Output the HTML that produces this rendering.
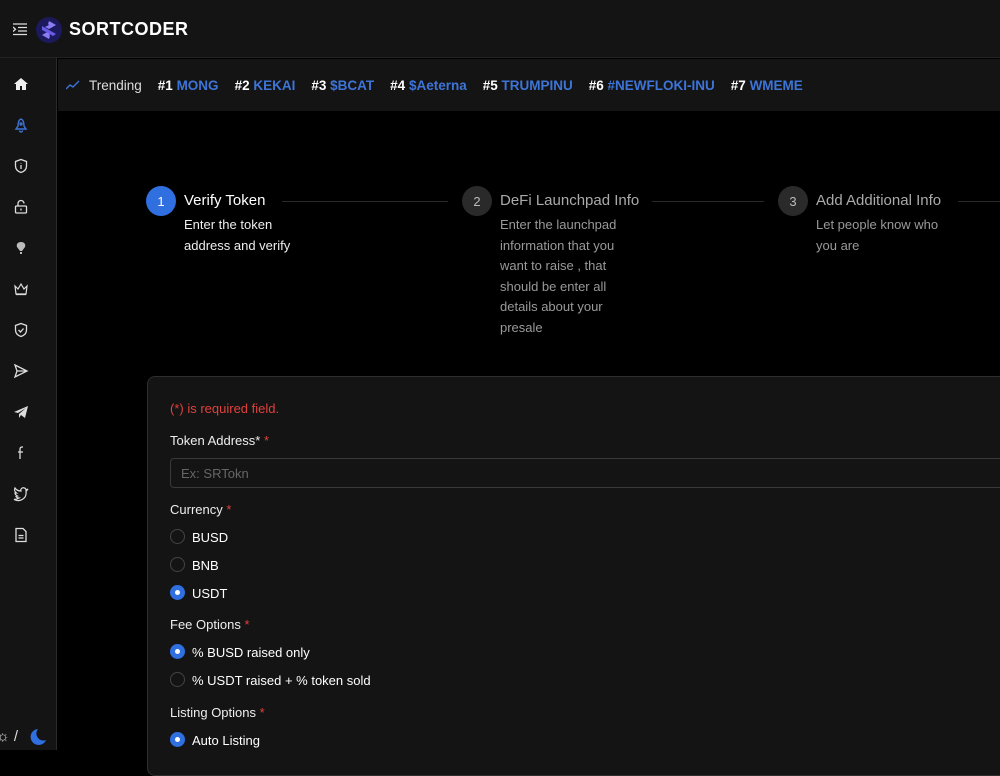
<!DOCTYPE html>
<html><head><meta charset="utf-8"><style>
*{box-sizing:border-box;margin:0;padding:0}
body{width:1000px;height:750px;overflow:hidden;background:#000;font-family:"Liberation Sans",sans-serif;color:#fff;position:relative}
.hdr{position:absolute;left:0;top:0;width:1000px;height:58px;background:#141414;border-bottom:1px solid #222}
.side{position:absolute;left:0;top:58px;width:57px;height:692px;background:#141414;border-right:1px solid #2a2a2a}
.trend{position:absolute;left:58px;top:59px;width:942px;height:52px;background:#141414;font-size:13.5px;display:flex;align-items:center;padding-left:8px}
.trend b{font-weight:bold;margin-left:16px}
.trend b span{color:#3d74d8}
.ic{position:absolute;left:13px;width:16px;height:16px}
.num{position:absolute;width:30px;height:30px;border-radius:50%;font-size:13px;display:flex;align-items:center;justify-content:center}
.st{position:absolute;font-size:15px;white-space:nowrap}
.sd{position:absolute;font-size:13px;line-height:20.5px;width:125px}
.line{position:absolute;height:1px;background:#2a2a2a;top:201px}
.card{position:absolute;left:147px;top:376px;width:870px;height:400px;background:#141414;border:1px solid #2e2e2e;border-radius:8px}
.t{position:absolute;left:170px;font-size:13px}
.r{color:#e0413c}
.rad{position:absolute;left:170px;width:15px;height:15px;border-radius:50%;border:1px solid #444}
.rad.on{background:#2f6fe0;border:none}
.rad.on::after{content:"";position:absolute;left:5px;top:5px;width:5px;height:5px;border-radius:50%;background:#fff}
.rl{position:absolute;left:192px;font-size:13px}
</style></head><body>
<div class="hdr">
<svg style="position:absolute;left:13px;top:23px" width="15" height="13" viewBox="0 0 15 13" stroke="#ddd" stroke-width="1.3" fill="none"><path d="M0 1h14M5 4.5h9M5 8h9M0 11.5h14M0 4l2.5 2.2L0 8.5"/></svg>
<svg style="position:absolute;left:36px;top:17px" width="26" height="26" viewBox="0 0 26 26"><circle cx="13" cy="13" r="13" fill="#1c1a5c"/><path d="M13 4l7 4-7 4-4-2 4-2-1-1z M13 22l-7-4 7-4 4 2-4 2 1 1z" fill="#8b7cf5"/><path d="M6 9l7 4 7 4-3 2-7-4-4-2z" fill="#6a5ae8"/></svg>
<div style="position:absolute;left:69px;top:19px;font-size:18px;font-weight:bold;letter-spacing:0.5px">SORTCODER</div>
</div>
<div class="side">
<svg class="ic" style="top:18px" viewBox="0 0 16 16"><path d="M8 2L1 8h2v6h4v-4h2v4h4V8h2z" fill="#eee"/></svg>
<svg class="ic" style="top:59px" viewBox="0 0 16 16" fill="none" stroke="#3d74d8" stroke-width="1.4"><path d="M8 2c3 1 3 5 3 7l2 3H3l2-3c0-2 0-6 3-7zM6.5 13.5a1.5 1.5 0 003 0"/><circle cx="8" cy="7" r="1"/></svg>
<svg class="ic" style="top:100px" viewBox="0 0 16 16" fill="none" stroke="#ddd" stroke-width="1.3"><path d="M8 1.5l5.5 2v4.5c0 3.5-2.5 5.5-5.5 6.5C5 13.5 2.5 11.5 2.5 8V3.5z M8 7v4M8 5v.5"/></svg>
<svg class="ic" style="top:141px" viewBox="0 0 16 16" fill="none" stroke="#ddd" stroke-width="1.3"><rect x="2.5" y="7" width="11" height="7" rx="1"/><path d="M5 7V4.5a3 3 0 016 0M8 9.5v2"/></svg>
<svg class="ic" style="top:182px" viewBox="0 0 16 16"><path d="M8 2c3 0 5 2 4 5l-3 4H7L4 7C3 4 5 2 8 2zM7 12h2v2H7z" fill="#bbb"/></svg>
<svg class="ic" style="top:223px" viewBox="0 0 16 16" fill="none" stroke="#ddd" stroke-width="1.2"><path d="M2 5l3 3 3-5 3 5 3-3-1 8H3z M3 13.5h10"/></svg>
<svg class="ic" style="top:264px" viewBox="0 0 16 16" fill="none" stroke="#ddd" stroke-width="1.3"><path d="M8 1.5l5.5 2v4.5c0 3.5-2.5 5.5-5.5 6.5C5 13.5 2.5 11.5 2.5 8V3.5z M5.5 8l2 2 3-3.5"/></svg>
<svg class="ic" style="top:305px" viewBox="0 0 16 16" fill="none" stroke="#ddd" stroke-width="1.3"><path d="M2 2l12 6-12 6 2-6zM4 8h10"/></svg>
<svg class="ic" style="top:346px" viewBox="0 0 16 16"><path d="M1 8l14-6-3 12-4-3-2 3v-4l7-6-8 5z" fill="#ddd"/></svg>
<svg class="ic" style="top:387px" viewBox="0 0 16 16" fill="none" stroke="#ddd" stroke-width="1.3"><path d="M10 2H9C7.5 2 7 3 7 4.5V14M5 7h5"/></svg>
<svg class="ic" style="top:428px" viewBox="0 0 16 16" fill="none" stroke="#ddd" stroke-width="1.2"><path d="M15 3l-2 1c0-2-3-3-4.5-1.5C7.5 3.5 8 5 8 5 5 5 3 3.5 2 2c-1 2 0 4 1.5 5L2 7c0 1.5 1.5 2.5 2.5 3L3 10.5c.5 1 2 1.5 3 1.5C4.5 13 3 13.5 1 13.5c6 3 13-1 12-8z"/></svg>
<svg class="ic" style="top:469px" viewBox="0 0 16 16" fill="none" stroke="#ddd" stroke-width="1.3"><path d="M3 1.5h7l3 3v10H3z M5.5 8.5h5M5.5 11h5"/></svg>
<div style="position:absolute;left:-4px;top:670px;font-size:15px;color:#ddd">☼ /</div>
<svg style="position:absolute;left:29px;top:671px" width="18" height="17" viewBox="0 0 18 17"><path d="M9 0a8 8 0 108 11A7 7 0 019 0z" fill="#2f6fe0"/></svg>
</div>
<div class="trend">
<svg width="14" height="10" viewBox="0 0 14 10" fill="none" stroke="#3d74d8" stroke-width="1.4"><path d="M0 9l4-4 3 2 6-6"/></svg>
<span style="margin-left:9px;color:#ddd">Trending</span>
<b>#1 <span>MONG</span></b><b>#2 <span>KEKAI</span></b><b>#3 <span>$BCAT</span></b><b>#4 <span>$Aeterna</span></b><b>#5 <span>TRUMPINU</span></b><b>#6 <span>#NEWFLOKI-INU</span></b><b>#7 <span>WMEME</span></b>
</div>
<div class="num" style="left:146px;top:186px;background:#2f6fe0">1</div>
<div class="st" style="left:184px;top:192px">Verify Token</div>
<div class="line" style="left:282px;width:166px"></div>
<div class="sd" style="left:184px;top:215px;color:#eee">Enter the token address and verify</div>
<div class="num" style="left:462px;top:186px;background:#2a2a2a;color:#bbb">2</div>
<div class="st" style="left:500px;top:192px;color:#aaa">DeFi Launchpad Info</div>
<div class="line" style="left:652px;width:112px"></div>
<div class="sd" style="left:500px;top:215px;color:#999;width:130px">Enter the launchpad information that you want to raise , that should be enter all details about your presale</div>
<div class="num" style="left:778px;top:186px;background:#2a2a2a;color:#bbb">3</div>
<div class="st" style="left:816px;top:192px;color:#aaa">Add Additional Info</div>
<div class="line" style="left:958px;width:42px"></div>
<div class="sd" style="left:816px;top:215px;color:#999;width:135px">Let people know who you are</div>
<div class="card"></div>
<div class="t r" style="top:401px">(*) is required field.</div>
<div class="t" style="top:433px;color:#eee">Token Address* <span class="r">*</span></div>
<div style="position:absolute;left:170px;top:458px;width:840px;height:30px;border:1px solid #3a3a3a;border-radius:4px;font-size:13px;color:#666;padding:7px 10px">Ex: SRTokn</div>
<div class="t" style="top:502px;color:#eee">Currency <span class="r">*</span></div>
<div class="rad" style="top:529px"></div><div class="rl" style="top:530px">BUSD</div>
<div class="rad" style="top:557px"></div><div class="rl" style="top:558px">BNB</div>
<div class="rad on" style="top:585px"></div><div class="rl" style="top:586px">USDT</div>
<div class="t" style="top:617px;color:#eee">Fee Options <span class="r">*</span></div>
<div class="rad on" style="top:644px"></div><div class="rl" style="top:645px">% BUSD raised only</div>
<div class="rad" style="top:672px"></div><div class="rl" style="top:673px">% USDT raised + % token sold</div>
<div class="t" style="top:705px;color:#eee">Listing Options <span class="r">*</span></div>
<div class="rad on" style="top:732px"></div><div class="rl" style="top:733px">Auto Listing</div>
</body></html>
